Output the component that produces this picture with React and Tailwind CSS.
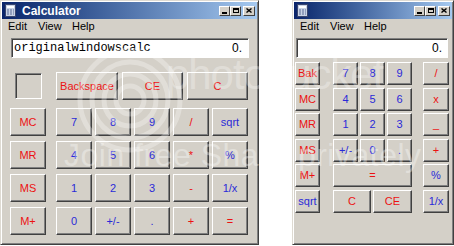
import React from 'react';

const btnBase =
  'flex items-center justify-center bg-[#d4d0c8] border border-t-white border-l-white border-r-[#404040] border-b-[#404040] shadow-[inset_-1px_-1px_#808080] text-[11px] leading-none';

const Btn = ({ label, red, className }) => (
  <div className={`${btnBase} ${red ? 'text-[#ec1212]' : 'text-[#2a2ad8]'} ${className}`}>{label}</div>
);

const CalcIcon = () => (
  <svg width="11" height="13" viewBox="0 0 11 13">
    <rect x="0.5" y="0.5" width="10" height="12" fill="#c9d3e6" stroke="#39456e" />
    <rect x="2" y="2" width="7" height="2" fill="#ffffff" />
    <path d="M2 6h2M5 6h2M8 6h1M2 8h2M5 8h2M8 8h1M2 10h2M5 10h2M8 10h1" stroke="#5a6a96" strokeWidth="1" />
  </svg>
);

const TitleBtn = ({ children, className }) => (
  <div className={`flex items-center justify-center bg-[#d4d0c8] border border-t-white border-l-white border-r-[#404040] border-b-[#404040] h-[10px] ${className}`}>
    {children}
  </div>
);

const TitleBar = ({ title }) => (
  <div className="mx-[1px] mt-[1px] h-[17px] flex items-center bg-linear-to-r from-[#0a246a] to-[#a6caf0] pl-[3px] pr-[2px]">
    <CalcIcon />
    {title && <span className="ml-[6px] text-white font-bold text-[12px] leading-none">{title}</span>}
    <div className="ml-auto flex items-center">
      <TitleBtn className="w-[11px]">
        <div className="w-[5px] h-[2px] bg-black mt-[4px]" />
      </TitleBtn>
      <TitleBtn className="w-[11px]">
        <div className="w-[6px] h-[5px] border border-black border-t-2" />
      </TitleBtn>
      <TitleBtn className="w-[12px] ml-[2px]">
        <svg width="6" height="5" viewBox="0 0 6 5">
          <path d="M0.5 0.5L5.5 4.5M5.5 0.5L0.5 4.5" stroke="#000" strokeWidth="1.4" />
        </svg>
      </TitleBtn>
    </div>
  </div>
);

const MenuBar = () => (
  <div className="h-[15px] flex items-center pl-[7px] text-[11px] text-black leading-none">
    <span className="w-[30px]">Edit</span>
    <span className="w-[34px]">View</span>
    <span>Help</span>
  </div>
);

const sunken =
  'bg-white border border-t-[#808080] border-l-[#808080] border-r-white border-b-white shadow-[inset_1px_1px_#404040]';

const LeftCalc = () => (
  <div className="w-[259px] h-[245px] shrink-0 flex flex-col bg-[#d4d0c8] border border-[#404040] border-t-[#dedad2] border-l-[#dedad2] shadow-[inset_1px_1px_#ffffff,inset_-1px_-1px_#808080]">
    <TitleBar title="Calculator" />
    <MenuBar />
    <div className={`${sunken} mt-[4px] ml-[10px] w-[238px] h-[20px] flex items-center justify-between pl-[2px] pr-[6px]`}>
      <span className="font-['Liberation_Mono',monospace] text-[12px] leading-none">originalwindowscalc</span>
      <span className="text-[12px] leading-none">0.</span>
    </div>

    <div className="mt-[14px] pl-[9px] flex flex-col gap-[5px]">
      <div className="flex mb-[3px]">
        <div className="w-[36px] flex items-center justify-center">
          <div className="w-[27px] h-[26px] border border-t-[#808080] border-l-[#808080] border-r-white border-b-white shadow-[inset_1px_1px_#404040]" />
        </div>
        <div className="ml-[10px] flex gap-[4px]">
          <Btn label="Backspace" red className="w-[62px] h-[28px]" />
          <Btn label="CE" red className="w-[61px] h-[28px]" />
          <Btn label="C" red className="w-[61px] h-[28px]" />
        </div>
      </div>
      {[
        [['MC', 1], ['7'], ['8'], ['9'], ['/', 1], ['sqrt']],
        [['MR', 1], ['4'], ['5'], ['6'], ['*', 1], ['%']],
        [['MS', 1], ['1'], ['2'], ['3'], ['-', 1], ['1/x']],
        [['M+', 1], ['0'], ['+/-'], ['.'], ['+', 1], ['=', 1]],
      ].map((row, i) => (
        <div key={i} className="flex">
          <Btn label={row[0][0]} red className="w-[36px] h-[28px]" />
          <div className="ml-[10px] flex gap-[3px]">
            {row.slice(1).map(([l, r]) => (
              <Btn key={l} label={l} red={!!r} className="w-[36px] h-[28px]" />
            ))}
          </div>
        </div>
      ))}
    </div>
  </div>
);

const RightCalc = () => {
  const rows = [
    ['Bak', ['7', '8', '9'], ['/', 1]],
    ['MC', ['4', '5', '6'], ['x', 1]],
    ['MR', ['1', '2', '3'], ['_', 1]],
    ['MS', ['+/-', '0', '.'], ['+', 1]],
  ];
  return (
    <div className="w-[162px] h-[245px] shrink-0 ml-[33px] flex flex-col bg-[#d4d0c8] border border-[#404040] border-t-[#dedad2] border-l-[#dedad2] shadow-[inset_1px_1px_#ffffff,inset_-1px_-1px_#808080]">
      <TitleBar />
      <MenuBar />
      <div className={`${sunken} mt-[4px] ml-[3px] w-[152px] h-[20px] flex items-center justify-end pr-[5px]`}>
        <span className="text-[12px] leading-none">0.</span>
      </div>
      <div className="mt-[4px] pl-[2px] flex flex-col gap-[2.6px]">
        {rows.map(([m, mid, [op, r]]) => (
          <div key={m} className="flex">
            <Btn label={m} red className="w-[25px] h-[23px]" />
            <div className="ml-[13px] flex gap-[2px]">
              {mid.map((l) => (
                <Btn key={l} label={l} className="w-[25px] h-[23px]" />
              ))}
            </div>
            <Btn label={op} red={!!r} className="ml-[11px] w-[26px] h-[23px]" />
          </div>
        ))}
        <div className="flex">
          <Btn label="M+" red className="w-[25px] h-[23px]" />
          <Btn label="=" red className="ml-[13px] w-[79px] h-[23px]" />
          <Btn label="%" className="ml-[11px] w-[26px] h-[23px]" />
        </div>
        <div className="flex">
          <Btn label="sqrt" className="w-[25px] h-[23px]" />
          <div className="ml-[13px] flex gap-[2px]">
            <Btn label="C" red className="w-[38px] h-[23px]" />
            <Btn label="CE" red className="w-[39px] h-[23px]" />
          </div>
          <Btn label="1/x" className="ml-[11px] w-[26px] h-[23px]" />
        </div>
      </div>
    </div>
  );
};

const App = () => (
  <div className="relative w-[454px] h-[246px] bg-white flex overflow-hidden font-['Liberation_Sans',Arial,sans-serif] text-black">
    <LeftCalc />
    <RightCalc />

    {/* photobucket watermark */}
    <div className="absolute inset-0 pointer-events-none">
      <svg className="absolute left-[70px] top-[40px]" width="120" height="120" viewBox="0 0 120 120">
        {[14, 26, 38, 50].map((r) => (
          <circle key={r} cx="60" cy="60" r={r} fill="none" stroke="#ffffff" strokeOpacity="0.3" strokeWidth="5" />
        ))}
      </svg>
      <div className="absolute left-[166px] top-[54px] text-[42px] leading-none text-white/30 tracking-tight">photobucket</div>
      <div className="absolute left-[64px] top-[139px] text-[32px] leading-none text-white/35 tracking-[0.5px]">Join free Share privately</div>
    </div>
  </div>
);

export default App;
